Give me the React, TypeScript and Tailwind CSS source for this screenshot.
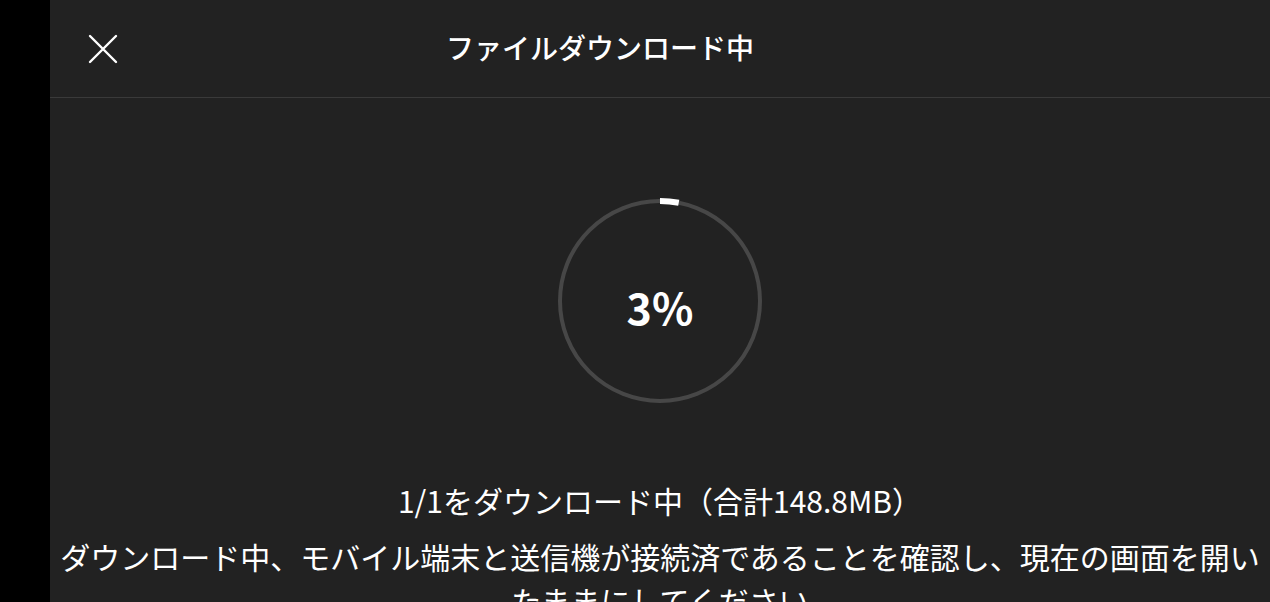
const FONT = "font-['Noto_Sans_CJK_JP','Noto_Sans',sans-serif]";

function CloseIcon() {
  return (
    <svg width="30" height="30" viewBox="0 0 30 30" fill="none">
      <path d="M2 2 L28 28 M28 2 L2 28" stroke="#ffffff" strokeWidth="2.4" strokeLinecap="round" />
    </svg>
  );
}

function ProgressRing({ percent }: { percent: number }) {
  const r = 100;
  const c = 2 * Math.PI * r;
  const len = (c * percent) / 100;
  return (
    <div className="relative h-[212px] w-[212px]">
      <svg width="212" height="212" viewBox="0 0 212 212" className="block">
        <circle cx="106" cy="106" r={r} fill="none" stroke="#474747" strokeWidth="4" />
        <circle
          cx="106"
          cy="106"
          r={r}
          fill="none"
          stroke="#ffffff"
          strokeWidth="6"
          strokeDasharray={`${len} ${c}`}
          transform="rotate(-90 106 106)"
        />
      </svg>
      <div className="absolute inset-0 flex items-center justify-center pt-[10px]">
        <span className="text-[43px] font-bold leading-none text-white">{percent}%</span>
      </div>
    </div>
  );
}

export default function App() {
  return (
    <div className={`flex h-[602px] w-[1270px] overflow-hidden bg-black ${FONT}`}>
      <div className="w-[50px] shrink-0 bg-black" />
      <div className="flex flex-1 flex-col bg-[#222222] text-white">
        <header className="flex h-[98px] shrink-0 items-center border-b border-[#3a3a3a]">
          <button className="ml-[38px] flex h-[30px] w-[30px] items-center justify-center">
            <CloseIcon />
          </button>
          <h1 className="mr-[188px] flex-1 pb-[3px] text-center text-[28px] font-medium leading-none">
            ファイルダウンロード中
          </h1>
        </header>
        <main className="flex flex-col items-center pt-[97px]">
          <ProgressRing percent={3} />
          <p className="mt-[71px] text-[30px] leading-[44px]">1/1をダウンロード中（合計148.8MB）</p>
          <p className="mt-[12px] w-[1212px] text-center text-[30px] leading-[44px]">
            ダウンロード中、モバイル端末と送信機が接続済であることを確認し、現在の画面を開いたままにしてください
          </p>
        </main>
      </div>
    </div>
  );
}
